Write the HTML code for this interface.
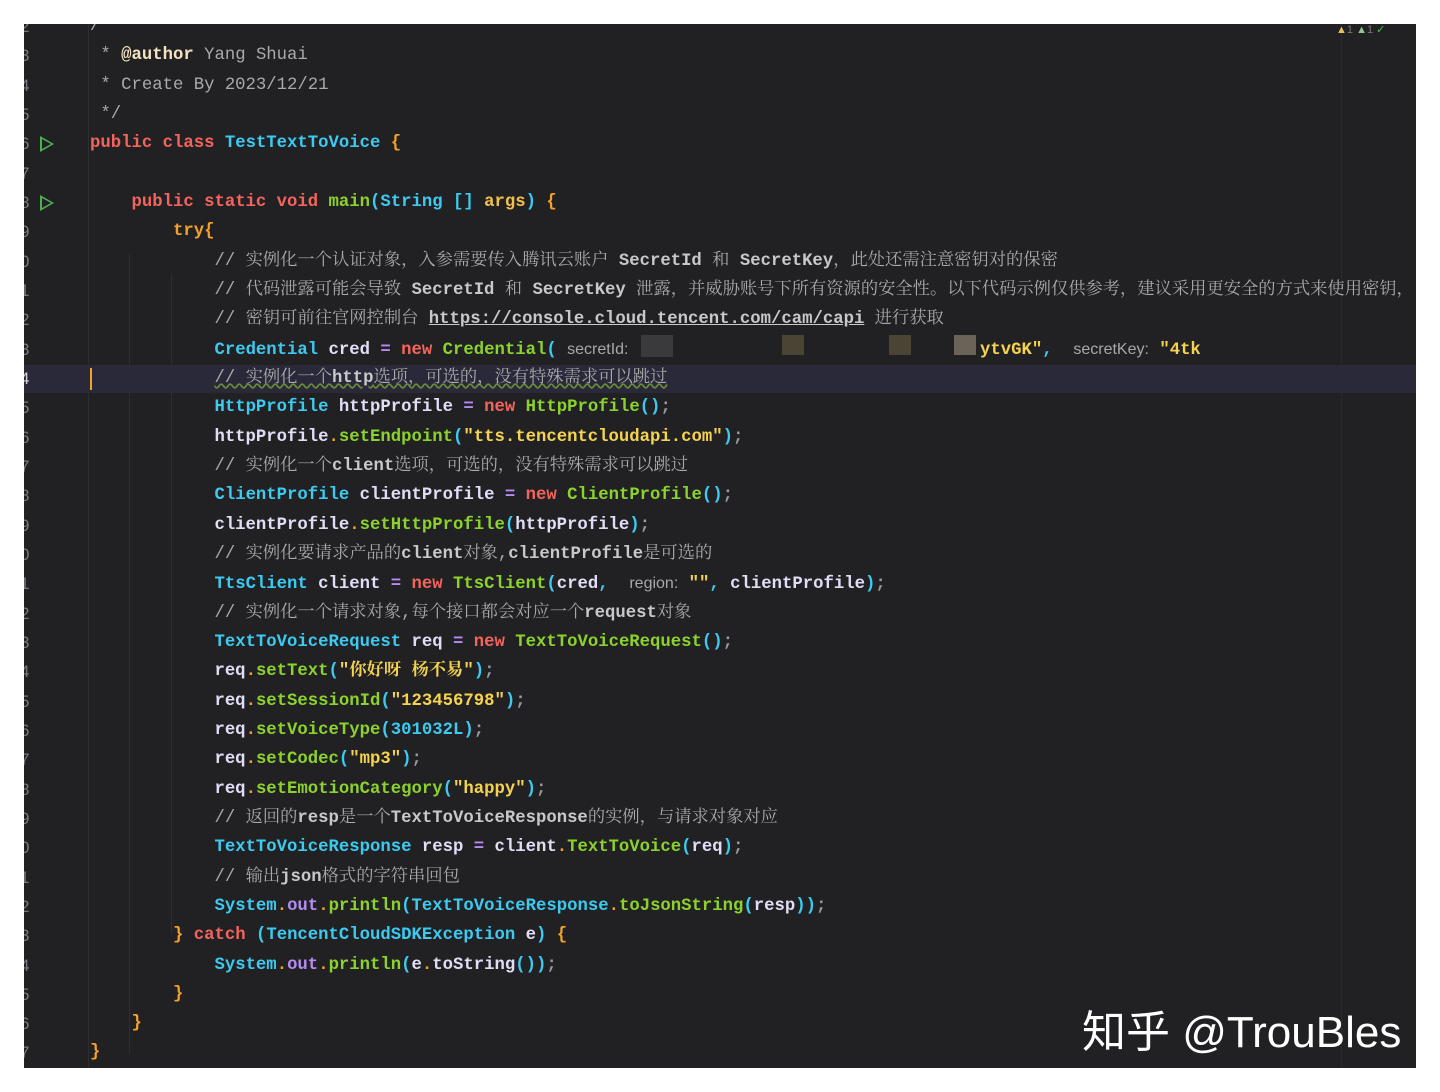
<!DOCTYPE html>
<html><head><meta charset="utf-8"><style>
html,body{margin:0;padding:0;background:#fff;width:1440px;height:1092px;overflow:hidden}
#ed{position:absolute;left:24px;top:24px;width:1392px;height:1044px;background:#212123;overflow:hidden}
#code{position:absolute;left:-24px;top:-12px;width:1440px;font-family:"Liberation Mono","Noto Serif CJK SC",monospace;font-weight:bold;font-size:17.3px;line-height:29.33px;color:#e2dcf5}
.l{height:29.33px;position:relative;padding-left:90px;white-space:pre}
.n{position:absolute;left:20px;top:0;width:20px;color:#7a7a7e;font-weight:normal;font-family:"Liberation Sans",sans-serif;font-size:17px}
.k{color:#f4645c}.t{color:#3ccaf0}.m{color:#8cd22c}.s{color:#f5d34f}.b{color:#f2a228}.c{color:#a9a9ab;font-weight:normal}.cb{color:#c8c8ca;font-weight:bold}.e{color:#b48cf2}.g{color:#9a9a9c}
.h{font-family:"Liberation Sans",sans-serif;font-weight:normal;color:#a8a8aa;font-size:16px}
.u{text-decoration:underline}
.run{position:absolute;left:40px;top:7px;width:0;height:0;border-left:14px solid transparent;border-top:8px solid transparent;border-bottom:8px solid transparent}
.run:before{content:"";position:absolute;left:-14px;top:-8px;border-left:14px solid #4caf50;border-top:8px solid transparent;border-bottom:8px solid transparent}
.run:after{content:"";position:absolute;left:-12px;top:-5px;border-left:9px solid #212123;border-top:5px solid transparent;border-bottom:5px solid transparent}
.vg{position:absolute;top:0;width:1px;height:1044px;background:#2e2e31}
</style></head><body>
<div id="ed">
<div class="vg" style="left:64px"></div>
<div class="vg" style="left:105px;top:230px;height:800px"></div>
<div class="vg" style="left:147px;top:250px;height:660px"></div>
<div class="vg" style="left:1317px;background:#2a2a2d"></div>
<div style="position:absolute;left:0;top:341px;width:1392px;height:28px;background:#29293a"></div>
<div style="position:absolute;left:66px;top:344px;width:2px;height:22px;background:#f2a228"></div>
<div style="position:absolute;left:617px;top:311px;width:32px;height:22px;background:#3a3a3c"></div>
<div style="position:absolute;left:758px;top:311px;width:22px;height:20px;background:#4a4434"></div>
<div style="position:absolute;left:865px;top:311px;width:22px;height:20px;background:#4a4434"></div>
<div style="position:absolute;left:930px;top:311px;width:22px;height:20px;background:#6a6458"></div>
<div id="code"><div class="l"><span class="n">2</span><span class="c">/**</span></div><div class="l"><span class="n">3</span><span class="c"> * <span style="color:#f3e2c0;font-weight:bold">@author</span> Yang Shuai</span></div><div class="l"><span class="n">4</span><span class="c"> * Create By 2023/12/21</span></div><div class="l"><span class="n">5</span><span class="c"> */</span></div><div class="l"><span class="n">6</span><span class="run"></span><span class="k">public class </span><span class="t">TestTextToVoice</span> <span class="b">{</span></div><div class="l"><span class="n">7</span></div><div class="l"><span class="n">8</span><span class="run"></span>    <span class="k">public static void </span><span class="m">main</span><span class="t">(String [] </span><span class="s" style="color:#f2c04a">args</span><span class="t">)</span> <span class="b">{</span></div><div class="l"><span class="n">9</span>        <span class="b">try{</span></div><div class="l"><span class="n">0</span>            <span class="c">// 实例化一个认证对象，入参需要传入腾讯云账户 <span class="cb">SecretId</span> 和 <span class="cb">SecretKey</span>，此处还需注意密钥对的保密</span></div><div class="l"><span class="n">1</span>            <span class="c">// 代码泄露可能会导致 <span class="cb">SecretId</span> 和 <span class="cb">SecretKey</span> 泄露，并威胁账号下所有资源的安全性。以下代码示例仅供参考，建议采用更安全的方式来使用密钥，</span></div><div class="l"><span class="n">2</span>            <span class="c">// 密钥可前往官网控制台 <span class="cb u">https://console.cloud.tencent.com/cam/capi</span> 进行获取</span></div><div class="l"><span class="n">3</span>            <span class="t">Credential</span> cred <span class="e">=</span> <span class="k">new</span> <span class="m">Credential</span><span class="t">(</span> <span class="h">secretId:</span><span style="position:absolute;left:980px" class="s">ytvGK"<span class="t">,</span>  <span class="h">secretKey:</span> "4tk</span></div><div class="l"><span class="n" style="color:#d0d0d4">4</span>            <span class="c" style="text-decoration:underline wavy #6a8a3a">// 实例化一个<span class="cb">http</span>选项，可选的，没有特殊需求可以跳过</span></div><div class="l"><span class="n">5</span>            <span class="t">HttpProfile</span> httpProfile <span class="e">=</span> <span class="k">new</span> <span class="m">HttpProfile</span><span class="t">()</span><span class="g">;</span></div><div class="l"><span class="n">6</span>            httpProfile<span class="b">.</span><span class="m">setEndpoint</span><span class="t">(</span><span class="s">"tts.tencentcloudapi.com"</span><span class="t">)</span><span class="g">;</span></div><div class="l"><span class="n">7</span>            <span class="c">// 实例化一个<span class="cb">client</span>选项，可选的，没有特殊需求可以跳过</span></div><div class="l"><span class="n">8</span>            <span class="t">ClientProfile</span> clientProfile <span class="e">=</span> <span class="k">new</span> <span class="m">ClientProfile</span><span class="t">()</span><span class="g">;</span></div><div class="l"><span class="n">9</span>            clientProfile<span class="b">.</span><span class="m">setHttpProfile</span><span class="t">(</span>httpProfile<span class="t">)</span><span class="g">;</span></div><div class="l"><span class="n">0</span>            <span class="c">// 实例化要请求产品的<span class="cb">client</span>对象,<span class="cb">clientProfile</span>是可选的</span></div><div class="l"><span class="n">1</span>            <span class="t">TtsClient</span> client <span class="e">=</span> <span class="k">new</span> <span class="m">TtsClient</span><span class="t">(</span>cred<span class="t">,</span>  <span class="h">region:</span> <span class="s">""</span><span class="t">,</span> clientProfile<span class="t">)</span><span class="g">;</span></div><div class="l"><span class="n">2</span>            <span class="c">// 实例化一个请求对象,每个接口都会对应一个<span class="cb">request</span>对象</span></div><div class="l"><span class="n">3</span>            <span class="t">TextToVoiceRequest</span> req <span class="e">=</span> <span class="k">new</span> <span class="m">TextToVoiceRequest</span><span class="t">()</span><span class="g">;</span></div><div class="l"><span class="n">4</span>            req<span class="b">.</span><span class="m">setText</span><span class="t">(</span><span class="s">"你好呀 杨不易"</span><span class="t">)</span><span class="g">;</span></div><div class="l"><span class="n">5</span>            req<span class="b">.</span><span class="m">setSessionId</span><span class="t">(</span><span class="s">"123456798"</span><span class="t">)</span><span class="g">;</span></div><div class="l"><span class="n">6</span>            req<span class="b">.</span><span class="m">setVoiceType</span><span class="t">(301032L)</span><span class="g">;</span></div><div class="l"><span class="n">7</span>            req<span class="b">.</span><span class="m">setCodec</span><span class="t">(</span><span class="s">"mp3"</span><span class="t">)</span><span class="g">;</span></div><div class="l"><span class="n">8</span>            req<span class="b">.</span><span class="m">setEmotionCategory</span><span class="t">(</span><span class="s">"happy"</span><span class="t">)</span><span class="g">;</span></div><div class="l"><span class="n">9</span>            <span class="c">// 返回的<span class="cb">resp</span>是一个<span class="cb">TextToVoiceResponse</span>的实例，与请求对象对应</span></div><div class="l"><span class="n">0</span>            <span class="t">TextToVoiceResponse</span> resp <span class="e">=</span> client<span class="b">.</span><span class="m">TextToVoice</span><span class="t">(</span>req<span class="t">)</span><span class="g">;</span></div><div class="l"><span class="n">1</span>            <span class="c">// 输出<span class="cb">json</span>格式的字符串回包</span></div><div class="l"><span class="n">2</span>            <span class="t">System</span><span class="b">.</span><span class="e">out</span><span class="b">.</span><span class="m">println</span><span class="t">(TextToVoiceResponse</span><span class="b">.</span><span class="m">toJsonString</span><span class="t">(</span>resp<span class="t">))</span><span class="g">;</span></div><div class="l"><span class="n">3</span>        <span class="b">}</span> <span class="k">catch</span> <span class="t">(TencentCloudSDKException</span> e<span class="t">)</span> <span class="b">{</span></div><div class="l"><span class="n">4</span>            <span class="t">System</span><span class="b">.</span><span class="e">out</span><span class="b">.</span><span class="m">println</span><span class="t">(</span>e<span class="b">.</span><span class="m" style="color:#e2dcf5">toString</span><span class="t">())</span><span class="g">;</span></div><div class="l"><span class="n">5</span>        <span class="b">}</span></div><div class="l"><span class="n">6</span>    <span class="b">}</span></div><div class="l"><span class="n">7</span><span class="b">}</span></div></div>
<div style="position:absolute;left:1312px;top:-1px;font-family:'Liberation Sans',sans-serif;font-size:11px;color:#777">
<span style="color:#e8c060">▲</span>1 <span style="color:#8fc88f">▲</span>1 <span style="color:#5cb85c">✓</span></div>
<div style="position:absolute;left:1058px;top:972px;font-family:'Liberation Sans','Noto Sans CJK SC',sans-serif;font-size:44px;color:#fff;white-space:nowrap">知乎 @TrouBles</div>
</div>
</body></html>
